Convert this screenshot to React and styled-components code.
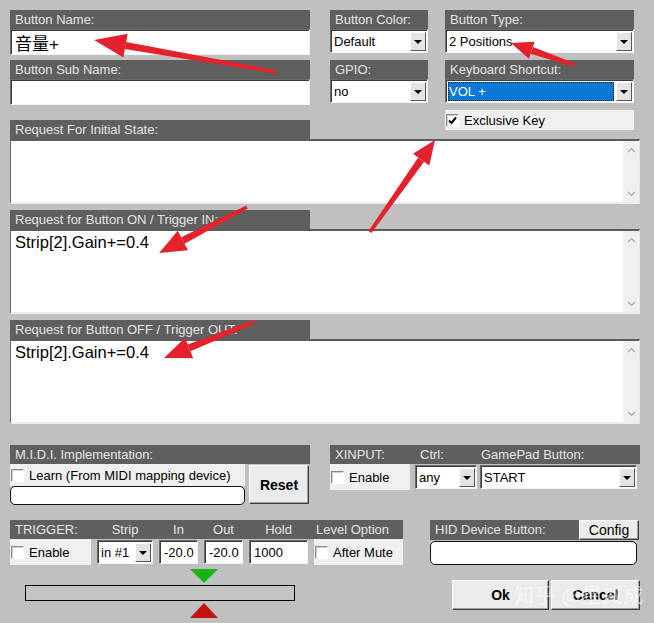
import React from "react";
import styled, { createGlobalStyle, css } from "styled-components";

const GlobalStyle = createGlobalStyle`
  html, body {
    margin: 0;
    padding: 0;
    background: #c0c0c0;
  }
  body {
    font-family: "Liberation Sans", Arial, "Noto Sans CJK SC", sans-serif;
  }
  * {
    box-sizing: border-box;
  }
`;

const Window = styled.div`
  position: relative;
  width: 654px;
  height: 623px;
  padding: 10px 14px 0 10px;
  background: #c0c0c0;
  font-size: 13px;
  color: #000;
  overflow: hidden;
`;

const Row = styled.div`
  display: flex;
  align-items: flex-start;
  margin-top: ${(p) => p.$top || 0}px;
`;

const Column = styled.div`
  display: flex;
  flex-direction: column;
  width: ${(p) => p.$width}px;
  margin-left: ${(p) => p.$left || 0}px;
  margin-top: ${(p) => p.$top || 0}px;
`;

const Header = styled.div`
  display: flex;
  height: ${(p) => p.$h || 19}px;
  width: ${(p) => (p.$width ? `${p.$width}px` : "auto")};
  margin-top: ${(p) => p.$top || 0}px;
  padding-left: ${(p) => (p.$flush ? 0 : 5)}px;
  background: #5f5f5f;
  color: #e4e4e4;
  font-size: 13px;
  line-height: ${(p) => p.$h || 19}px;
  white-space: nowrap;
  flex: ${(p) => (p.$grow ? 1 : "none")};
`;

const HeaderCell = styled.span`
  width: ${(p) => (p.$width ? `${p.$width}px` : "auto")};
  padding-left: ${(p) => p.$pad || 0}px;
  text-align: ${(p) => p.$align || "left"};
`;

const sunken = css`
  background: #fff;
  border: 1px solid;
  border-color: #6a6a6a #f4f4f4 #f4f4f4 #6a6a6a;
  box-shadow: inset 1px 1px 0 #3c3c3c;
`;

const TextBox = styled.div`
  ${sunken};
  display: flex;
  align-items: center;
  height: ${(p) => p.$h || 24}px;
  width: ${(p) => (p.$width ? `${p.$width}px` : "100%")};
  margin-top: ${(p) => p.$top || 0}px;
  padding: 1px 4px 0;
  font-size: ${(p) => p.$size || 13}px;
  white-space: nowrap;
`;

const SelectBox = styled.div`
  ${sunken};
  display: flex;
  height: 24px;
  width: ${(p) => (p.$width ? `${p.$width}px` : "100%")};
  margin-left: ${(p) => p.$left || 0}px;
  padding: 2px 1px 1px 2px;
`;

const SelectValue = styled.div`
  flex: 1;
  display: flex;
  align-items: center;
  padding-left: 1px;
  font-size: 13px;
  white-space: nowrap;
  overflow: hidden;

  ${(p) =>
    p.$selected &&
    css`
      background: #0a78d7;
      color: #fff;
      outline: 1px dotted #1b1b1b;
      outline-offset: -1px;
    `}
`;

const DropButton = styled.div`
  width: 16px;
  margin-left: 2px;
  display: flex;
  align-items: center;
  justify-content: center;
  background: #e4e4e4;
  border: 1px solid;
  border-color: #fdfdfd #555 #555 #fdfdfd;

  &::after {
    content: "";
    border-left: 4px solid transparent;
    border-right: 4px solid transparent;
    border-top: 4px solid #000;
  }
`;

const Memo = styled.div`
  display: flex;
  width: 630px;
  height: ${(p) => p.$h}px;
  background: #fff;
  border-top: 2px solid #5c5c5c;
  border-left: 1px solid #6a6a6a;
  border-right: 1px solid #e6e6e6;
  border-bottom: 2px solid #ececec;
`;

const MemoText = styled.div`
  flex: 1;
  padding: 1px 4px;
  font-size: 16.5px;
  line-height: 20px;
`;

const ScrollTrack = styled.div`
  width: 16px;
  display: flex;
  flex-direction: column;
  justify-content: space-between;
  align-items: center;
  padding: 6px 0 5px;
  background: #f0f0f0;
`;

const CheckCell = styled.div`
  display: flex;
  align-items: center;
  gap: 5px;
  height: ${(p) => p.$h || 26}px;
  width: ${(p) => (p.$width ? `${p.$width}px` : "auto")};
  margin-top: ${(p) => p.$top || 0}px;
  padding-left: 1px;
  background: #f0f0f0;
  font-size: 13px;
  white-space: nowrap;
`;

const Tick = styled.span`
  display: flex;
  align-items: center;
  justify-content: center;
  width: 13px;
  height: 13px;
  background: #fff;
  border: 1px solid;
  border-color: #8a8a8a #fff #fff #8a8a8a;
  box-shadow: inset 1px 1px 0 #d0d0d0;
`;

const RoundField = styled.div`
  height: ${(p) => p.$h}px;
  width: ${(p) => p.$width}px;
  margin-top: ${(p) => p.$top || 0}px;
  background: #fff;
  border: 1px solid #111;
  border-radius: 5px;
`;

const PushButton = styled.button`
  width: ${(p) => p.$width}px;
  height: ${(p) => p.$h}px;
  margin-top: ${(p) => p.$top || 0}px;
  margin-left: ${(p) => p.$left || 0}px;
  padding: 0;
  background: #ebebeb;
  border: 1px solid;
  border-color: #fff #3c3c3c #3c3c3c #fff;
  box-shadow: inset -1px -1px 0 #9c9c9c;
  font-family: inherit;
  font-size: 14px;
  font-weight: ${(p) => (p.$bold ? 700 : 400)};
  color: #000;
`;

const TriggerGrid = styled.div`
  display: grid;
  grid-template-columns: 81px 56px 39px 39px 59px 89px;
  column-gap: 6px;
  align-items: center;
  height: ${(p) => p.$h}px;
  ${(p) =>
    p.$head &&
    css`
      background: #5f5f5f;
      color: #e4e4e4;
      line-height: ${p.$h}px;
    `}
`;

const Meter = styled.div`
  display: flex;
  flex-direction: column;
  width: 270px;
  margin: 4px 0 0 15px;
`;

const Marker = styled.div`
  width: 0;
  height: 0;
  margin-left: ${(p) => p.$at}px;
  border-left: 14px solid transparent;
  border-right: 14px solid transparent;
  ${(p) =>
    p.$up
      ? css`
          margin-top: 2px;
          border-bottom: 15px solid #c21313;
        `
      : css`
          border-top: 14px solid #15b515;
        `}
`;

const MeterBar = styled.div`
  height: 16px;
  margin-top: 2px;
  border: 1px solid #000;
  background: #c4c4c4;
`;

const DialogButtons = styled.div`
  display: flex;
  gap: 2px;
  margin: 15px 0 0 auto;
`;

const Overlay = styled.svg`
  position: absolute;
  left: 0;
  top: 0;
  pointer-events: none;
`;

const Watermark = styled.div`
  position: absolute;
  left: 514px;
  top: 580px;
  font-family: "Noto Sans CJK SC", sans-serif;
  font-size: 20px;
  color: rgba(255, 255, 255, 0.55);
  letter-spacing: 1px;
  pointer-events: none;
`;

const Select = ({ value, width, left, selected }) => (
  <SelectBox $width={width} $left={left}>
    <SelectValue $selected={selected}>{value}</SelectValue>
    <DropButton />
  </SelectBox>
);

const Check = ({ checked }) => (
  <Tick>
    {checked && (
      <svg width="9" height="9" viewBox="0 0 9 9">
        <path d="M1 4.5 L3.5 7 L8 1.5" fill="none" stroke="#000" strokeWidth="2" />
      </svg>
    )}
  </Tick>
);

const Chevron = ({ up }) => (
  <svg width="9" height="6" viewBox="0 0 9 6">
    <path
      d={up ? "M1 5 L4.5 1.5 L8 5" : "M1 1 L4.5 4.5 L8 1"}
      fill="none"
      stroke="#a9a9a9"
      strokeWidth="1.2"
    />
  </svg>
);

const MemoBox = ({ h, text }) => (
  <Memo $h={h}>
    <MemoText>{text}</MemoText>
    <ScrollTrack>
      <Chevron up />
      <Chevron />
    </ScrollTrack>
  </Memo>
);

// red callout arrows: shaft tapers from the tail towards the head
const arrows = [
  { from: [276, 72], to: [94, 40], len: 32, half: 12 },
  { from: [574, 65], to: [511, 43], len: 22, half: 9 },
  { from: [370, 232], to: [435, 140], len: 24, half: 10 },
  { from: [247, 207], to: [159, 253], len: 27, half: 11 },
  { from: [254, 322], to: [164, 358], len: 27, half: 11 },
];

const arrowShapes = ({ from, to, len, half }) => {
  const [x1, y1] = from;
  const [x2, y2] = to;
  const L = Math.hypot(x2 - x1, y2 - y1);
  const dx = (x2 - x1) / L;
  const dy = (y2 - y1) / L;
  const nx = -dy;
  const ny = dx;
  const bx = x2 - dx * len;
  const by = y2 - dy * len;
  const pt = (x, y) => `${x.toFixed(1)},${y.toFixed(1)}`;
  const shaft = [
    pt(x1 + nx * 1.8, y1 + ny * 1.8),
    pt(bx + nx * 3.6, by + ny * 3.6),
    pt(bx - nx * 3.6, by - ny * 3.6),
    pt(x1 - nx * 1.8, y1 - ny * 1.8),
  ].join(" ");
  const head = [pt(x2, y2), pt(bx + nx * half, by + ny * half), pt(bx - nx * half, by - ny * half)].join(" ");
  return { shaft, head };
};

const Callouts = () => (
  <Overlay width="654" height="623" viewBox="0 0 654 623">
    {arrows.map((a, i) => {
      const { shaft, head } = arrowShapes(a);
      return (
        <g key={i} fill="#e3222b">
          <polygon points={shaft} />
          <polygon points={head} />
        </g>
      );
    })}
  </Overlay>
);

export default function App() {
  return (
    <>
      <GlobalStyle />
      <Window>
        <Row>
          <Column $width={300}>
            <Header>Button Name:</Header>
            <TextBox $h={26} $size={17}>音量+</TextBox>
            <Header $top={5}>Button Sub Name:</Header>
            <TextBox $h={26} />
            <Header $top={15}>Request For Initial State:</Header>
          </Column>
          <Column $width={98} $left={20}>
            <Header>Button Color:</Header>
            <Select value="Default" />
            <Header $top={7}>GPIO:</Header>
            <Select value="no" />
          </Column>
          <Column $width={189} $left={17}>
            <Header>Button Type:</Header>
            <Select value="2 Positions" />
            <Header $top={7}>Keyboard Shortcut:</Header>
            <Select value="VOL +" selected />
            <CheckCell $h={20} $top={7}>
              <Check checked />
              Exclusive Key
            </CheckCell>
          </Column>
        </Row>

        <MemoBox h={65} />
        <Header $width={300} $top={6}>Request for Button ON / Trigger IN:</Header>
        <MemoBox h={85} text="Strip[2].Gain+=0.4" />
        <Header $width={300} $top={6}>Request for Button OFF / Trigger OUT:</Header>
        <MemoBox h={85} text="Strip[2].Gain+=0.4" />

        <Row $top={21}>
          <Column $width={300}>
            <Header>M.I.D.I. Implementation:</Header>
            <Row>
              <Column $width={235}>
                <CheckCell $h={22} $width={235}>
                  <Check />
                  Learn (From MIDI mapping device)
                </CheckCell>
                <RoundField $h={19} $width={235} />
              </Column>
              <PushButton $width={60} $h={39} $top={1} $left={4} $bold>
                Reset
              </PushButton>
            </Row>
          </Column>
          <Column $width={310} $left={20}>
            <Header $flush>
              <HeaderCell $width={85} $pad={5}>XINPUT:</HeaderCell>
              <HeaderCell $width={65} $pad={5}>Ctrl:</HeaderCell>
              <HeaderCell $pad={1}>GamePad Button:</HeaderCell>
            </Header>
            <Row>
              <CheckCell $width={80}>
                <Check />
                Enable
              </CheckCell>
              <Column $width={62} $left={5} $top={1}>
                <Select value="any" />
              </Column>
              <Column $width={157} $left={3} $top={1}>
                <Select value="START" />
              </Column>
            </Row>
          </Column>
        </Row>

        <Row $top={15}>
          <Column $width={393}>
            <TriggerGrid $head $h={19}>
              <HeaderCell $pad={5}>TRIGGER:</HeaderCell>
              <HeaderCell $align="center">Strip</HeaderCell>
              <HeaderCell $align="center">In</HeaderCell>
              <HeaderCell $align="center">Out</HeaderCell>
              <HeaderCell $align="center">Hold</HeaderCell>
              <HeaderCell $pad={2}>Level Option</HeaderCell>
            </TriggerGrid>
            <TriggerGrid $h={26}>
              <CheckCell>
                <Check />
                Enable
              </CheckCell>
              <Select value="in #1" />
              <TextBox>-20.0</TextBox>
              <TextBox>-20.0</TextBox>
              <TextBox>1000</TextBox>
              <CheckCell>
                <Check />
                After Mute
              </CheckCell>
            </TriggerGrid>
          </Column>
          <Column $width={209} $left={27}>
            <Row>
              <Header $h={20} $grow>HID Device Button:</Header>
              <PushButton $width={60} $h={20}>
                Config
              </PushButton>
            </Row>
            <RoundField $h={24} $width={207} $top={1} />
          </Column>
        </Row>

        <Row>
          <Meter>
            <Marker $at={165} />
            <MeterBar />
            <Marker $at={165} $up />
          </Meter>
          <DialogButtons>
            <PushButton $width={97} $h={30} $bold>
              Ok
            </PushButton>
            <PushButton $width={89} $h={30} $bold>
              Cancel
            </PushButton>
          </DialogButtons>
        </Row>

        <Callouts />
        <Watermark>知乎 @星威成</Watermark>
      </Window>
    </>
  );
}
